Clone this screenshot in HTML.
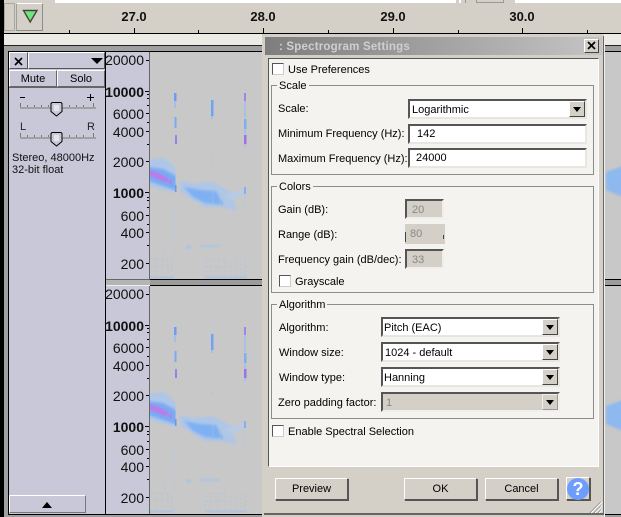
<!DOCTYPE html>
<html><head><meta charset="utf-8">
<style>
html,body{margin:0;padding:0}
body{width:621px;height:517px;overflow:hidden;position:relative;background:#a0a0a0;font-family:"Liberation Sans",sans-serif;font-size:11px;color:#000}
div,span,svg{position:absolute;box-sizing:border-box}
.t{white-space:nowrap;line-height:14px;height:14px}
.ax{font-size:14px;color:#111;white-space:nowrap;line-height:14px;text-align:right;width:40px;left:104px}
.rl{font-size:13px;font-weight:bold;color:#111;white-space:nowrap;line-height:14px;width:50px;text-align:center;top:10px}
.in{background:#fff;border:2px solid;border-color:#555 #e8e6e0 #e8e6e0 #555;height:20px;line-height:17px;padding-left:7px;white-space:nowrap}
.c{line-height:19px}
.dis{background:#d4d0c8;color:#888;border-color:#555 #f0efea #f0efea #555;line-height:19px}
.btn{background:#d4d0c8;border:1px solid;border-color:#fff #555 #555 #fff;box-shadow:1px 1px 0 #555;text-align:center;line-height:21px}
.arr{background:#d4d0c8;border:1px solid;border-color:#fff #444 #444 #fff;width:16px;height:16px;top:0;right:0}
.arr:after{content:"";position:absolute;left:3px;top:5px;border:4px solid transparent;border-top:5px solid #000;border-bottom:0}
.cb{width:12px;height:12px;background:#fff;border:1px solid;border-color:#555 #ccc #ccc #555}
.gb{border:1px solid #8c8c88;left:271px;width:323px}
.lg{background:#f4f3ef;padding:0 2px;left:5px;top:-6px;line-height:13px;height:13px;white-space:nowrap;font-size:11px}
</style></head><body>

<!-- top chrome -->
<div style="left:0;top:0;width:4px;height:517px;background:#000"></div>
<div style="left:4px;top:0;width:617px;height:34px;background:#d4d0c8"></div>
<div style="left:55px;top:0;width:566px;height:3px;background:#fff"></div>
<div style="left:456px;top:0;width:59px;height:3px;background:#d4d0c8"></div>
<div style="left:459px;top:0;width:2px;height:3px;background:#fff"></div>
<div style="left:465px;top:0;width:1px;height:3px;background:#999"></div>
<div style="left:476px;top:0;width:28px;height:3px;border-bottom:1px solid #999;border-left:1px solid #999;border-right:1px solid #999"></div>
<div style="left:4px;top:3px;width:11px;height:28px;border:1px solid #a8a8a0"></div>
<div style="left:16px;top:3px;width:27px;height:28px;border:1px solid #8c8c88;border-top-color:#fff;border-left-color:#a0a09a"></div>
<svg style="left:22px;top:9px" width="17" height="15"><path d="M1.500 1.500H15L8.200 13Z" fill="#6ee67a" stroke="#444" stroke-width="1.400"/></svg>
<div class="rl" style="left:109px">27.0</div>
<div class="rl" style="left:238px">28.0</div>
<div class="rl" style="left:368px">29.0</div>
<div class="rl" style="left:497px">30.0</div>
<div style="left:69px;top:30px;width:1px;height:3px;background:#000"></div>
<div style="left:134px;top:28px;width:1px;height:5px;background:#000"></div>
<div style="left:198px;top:30px;width:1px;height:3px;background:#000"></div>
<div style="left:263px;top:28px;width:1px;height:5px;background:#000"></div>
<div style="left:328px;top:30px;width:1px;height:3px;background:#000"></div>
<div style="left:393px;top:28px;width:1px;height:5px;background:#000"></div>
<div style="left:458px;top:30px;width:1px;height:3px;background:#000"></div>
<div style="left:522px;top:28px;width:1px;height:5px;background:#000"></div>
<div style="left:587px;top:30px;width:1px;height:3px;background:#000"></div>
<div style="left:4px;top:33px;width:617px;height:1px;background:#000"></div>
<div style="left:4px;top:34px;width:617px;height:12px;background:#ecebe6"></div>
<div style="left:4px;top:45px;width:617px;height:1px;background:#222"></div>
<div style="left:4px;top:46px;width:617px;height:471px;background:#a0a0a0"></div>

<!-- track panel -->
<div style="left:8px;top:51px;width:613px;height:464px;background:#000"></div>
<div style="left:9px;top:52px;width:96px;height:462px;background:#c8c8d8"></div>
<div style="left:9px;top:52px;width:19px;height:17px;background:#c8c8d8;border:1px solid;border-color:#fff #555 #555 #fff"></div>
<svg style="left:14px;top:57px" width="10" height="10"><path d="M1 1L8 8M8 1L1 8" stroke="#000" stroke-width="1.600"/></svg>
<div style="left:28px;top:52px;width:77px;height:17px;background:#c8c8d8;border:1px solid;border-color:#fff #555 #555 #fff"></div>
<div style="left:91px;top:58px;border:6px solid transparent;border-top:6px solid #000;border-bottom:0"></div>
<div style="left:9px;top:70px;width:48px;height:17px;background:#c8c8d8;border:1px solid;border-color:#fff #666 #666 #fff;text-align:center;line-height:16px">Mute</div>
<div style="left:57px;top:70px;width:48px;height:17px;background:#c8c8d8;border:1px solid;border-color:#fff #666 #666 #fff;text-align:center;line-height:16px">Solo</div>
<div style="left:9px;top:87px;width:96px;height:1px;background:#666"></div>

<svg style="left:15px;top:92px" width="85" height="60">
<g fill="#000"><rect x="5" y="5" width="5" height="1"/><rect x="72" y="5" width="7" height="1"/><rect x="75" y="2" width="1" height="7"/></g>
<g>
<rect x="5" y="15" width="76" height="2" fill="#a0a0a0"/>
<path d="M5.500 11v4M12.500 13v2M19.500 13v2M26.500 13v2M33.500 13v2M54.500 13v2M61.500 13v2M68.500 13v2M78.500 11v4" stroke="#777" fill="none"/>
<path d="M37 10.500h9l1 1v8l-5.500 4.500l-5.500-4.500v-8z" fill="#c8c8d8" stroke="#000" stroke-width="1"/>
<path d="M39 14h5M39 16h5M39 18h5" stroke="#fff"/>
</g>
<g transform="translate(0,30)">
<rect x="5" y="15" width="76" height="2" fill="#a0a0a0"/>
<path d="M5.500 11v4M12.500 13v2M19.500 13v2M26.500 13v2M33.500 13v2M54.500 13v2M61.500 13v2M68.500 13v2M78.500 11v4" stroke="#777" fill="none"/>
<path d="M37 10.500h9l1 1v8l-5.500 4.500l-5.500-4.500v-8z" fill="#c8c8d8" stroke="#000" stroke-width="1"/>
<path d="M39 14h5M39 16h5M39 18h5" stroke="#fff"/>
</g>
</svg>
<div class="t" style="left:20px;top:120px;color:#222">L</div>
<div class="t" style="left:87px;top:120px;color:#222">R</div>
<div class="t" style="left:12px;top:151px;color:#111">Stereo, 48000Hz</div>
<div class="t" style="left:12px;top:163px;color:#111">32-bit float</div>
<div style="left:9px;top:495px;width:77px;height:18px;background:#c8c8d8;border:1px solid;border-color:#fff #777 #777 #fff"></div>
<div style="left:42px;top:502px;border:5.500px solid transparent;border-bottom:6px solid #000;border-top:0"></div>

<!-- axes -->
<div style="left:106px;top:52px;width:44px;height:227px;background:#c8c8d8"></div>
<div style="left:106px;top:286px;width:44px;height:228px;background:#c8c8d8"></div>
<div style="left:106px;top:279px;width:44px;height:7px;background:#b4b4b4;border-top:1px solid #666;border-bottom:1px solid #eee"></div>
<div style="left:105px;top:52px;width:1px;height:462px;background:#000"></div>
<div style="left:149px;top:52px;width:1px;height:227px;background:#666"></div>
<div style="left:149px;top:286px;width:1px;height:228px;background:#666"></div>

<div class="ax" style="top:53px">20000</div>
<div class="ax" style="top:85px;font-weight:bold">10000</div>
<div class="ax" style="top:107px">6000</div>
<div class="ax" style="top:125px">4000</div>
<div class="ax" style="top:155px">2000</div>
<div class="ax" style="top:186px;font-weight:bold">1000</div>
<div class="ax" style="top:209px">600</div>
<div class="ax" style="top:226px">400</div>
<div class="ax" style="top:257px">200</div>

<div class="ax" style="top:287px">20000</div>
<div class="ax" style="top:319px;font-weight:bold">10000</div>
<div class="ax" style="top:341px">6000</div>
<div class="ax" style="top:359px">4000</div>
<div class="ax" style="top:389px">2000</div>
<div class="ax" style="top:420px;font-weight:bold">1000</div>
<div class="ax" style="top:443px">600</div>
<div class="ax" style="top:460px">400</div>
<div class="ax" style="top:491px">200</div>

<svg style="left:144px;top:52px" width="6" height="462">
<g fill="#000">
<rect x="2" y="8" width="3" height="1"/><rect x="1" y="39" width="4" height="1"/><rect x="3" y="42" width="2" height="1"/><rect x="3" y="46" width="2" height="1"/><rect x="3" y="53" width="2" height="1"/><rect x="2" y="61" width="3" height="1"/><rect x="3" y="70" width="2" height="1"/><rect x="2" y="79" width="3" height="1"/><rect x="3" y="92" width="2" height="1"/><rect x="2" y="109" width="3" height="1"/><rect x="1" y="140" width="4" height="1"/><rect x="3" y="145" width="2" height="1"/><rect x="3" y="148" width="2" height="1"/><rect x="3" y="155" width="2" height="1"/><rect x="2" y="163" width="3" height="1"/><rect x="3" y="172" width="2" height="1"/><rect x="2" y="180" width="3" height="1"/><rect x="3" y="193" width="2" height="1"/><rect x="2" y="211" width="3" height="1"/>
</g>
<g transform="translate(0,234)" fill="#000">
<rect x="2" y="8" width="3" height="1"/><rect x="1" y="39" width="4" height="1"/><rect x="3" y="42" width="2" height="1"/><rect x="3" y="46" width="2" height="1"/><rect x="3" y="53" width="2" height="1"/><rect x="2" y="61" width="3" height="1"/><rect x="3" y="70" width="2" height="1"/><rect x="2" y="79" width="3" height="1"/><rect x="3" y="92" width="2" height="1"/><rect x="2" y="109" width="3" height="1"/><rect x="1" y="140" width="4" height="1"/><rect x="3" y="145" width="2" height="1"/><rect x="3" y="148" width="2" height="1"/><rect x="3" y="155" width="2" height="1"/><rect x="2" y="163" width="3" height="1"/><rect x="3" y="172" width="2" height="1"/><rect x="2" y="180" width="3" height="1"/><rect x="3" y="193" width="2" height="1"/><rect x="2" y="211" width="3" height="1"/>
</g>
</svg>

<!-- spectrograms -->
<svg style="left:0;top:0" width="621" height="517">
<defs>
<filter id="b2" x="-30%" y="-30%" width="160%" height="160%"><feGaussianBlur stdDeviation="1.300"/></filter>
<filter id="b1" x="-30%" y="-30%" width="160%" height="160%"><feGaussianBlur stdDeviation="0.800"/></filter>
<clipPath id="cb1"><rect x="150" y="150" width="25.500" height="50"/></clipPath>
<g id="sp">
<g clip-path="url(#cb1)">
<g filter="url(#b2)" fill="#aec6e8"><path d="M146 160L164 158L178 170L178 193L160 189L146 184Z"/></g>
<g filter="url(#b2)" fill="#78aaf4"><path d="M146 167L163 169L178 177L178 191L160 185L146 180Z"/></g>
<g filter="url(#b1)" fill="#b87ee8"><path d="M150 170L159 173L168 178L168 182L162 181L150 176Z"/><rect x="169" y="180" width="3" height="4"/></g>
</g>
<g filter="url(#b2)" fill="#aec6e8">
<path d="M180 181L194 184L212 182L232 192L237 211L222 207L205 207L190 198L180 191Z"/>
</g>
<g filter="url(#b2)" fill="#7eb0f4">
<path d="M184 187L200 190L216 191L224 205L205 203L193 197Z"/>
</g>
<g filter="url(#b1)" fill="#b4cbea"><path d="M225 195L238 192L245 189L245 193L232 200Z"/></g>
<path d="M220 190v18M224 190v18M228 193v15M232 194v15M236 195v13M213 188v15" stroke="#c8c8c8" stroke-width="1" opacity=".4"/>
<g shape-rendering="crispEdges">
<rect x="174" y="93" width="2.500" height="8" fill="#6e9cf0"/><rect x="174" y="101" width="2" height="7" fill="#a4bee6"/><rect x="174.500" y="117" width="2" height="11" fill="#7aaaf0"/><rect x="175" y="135" width="2" height="3" fill="#8a90ea"/><rect x="175" y="138" width="2" height="6" fill="#a478e8"/>
<rect x="211" y="100" width="2.500" height="16" fill="#6ea4f2"/><rect x="211" y="116" width="2" height="3" fill="#a4bee6"/><rect x="212" y="92" width="1" height="8" fill="#bccce0"/><rect x="212" y="158" width="1" height="4" fill="#b4c4dc"/>
<rect x="244" y="93" width="2" height="8" fill="#a880ea"/><rect x="244" y="101" width="2" height="17" fill="#a8c0e4"/><rect x="244" y="119" width="2.500" height="10" fill="#80aef0"/><rect x="244" y="129" width="2" height="6" fill="#a8c0e4"/><rect x="244" y="135" width="2.500" height="9" fill="#a070e8"/><rect x="244" y="144" width="2" height="3" fill="#a8c0e4"/>
<rect x="175" y="185" width="1.500" height="7" fill="#6a98e8"/><rect x="244" y="187" width="2" height="7" fill="#88aef0"/><rect x="244" y="194" width="1" height="16" fill="#b4c8e0"/>
<rect x="175" y="210" width="1" height="30" fill="#bccade"/>
</g>
<g filter="url(#b1)">
<ellipse cx="189" cy="247" rx="2.500" ry="2" fill="#a8c4ea"/><rect x="201" y="245" width="18" height="2" fill="#a8c4e8"/>
</g>
<g fill="none" stroke="#a8c0e4" stroke-width="1" opacity=".45">
<path d="M165 246v12M174 246v12M156 258v20M162 260v18M168 260v18M172 258v20M205 258v20M210 262v16M218 262v16M225 258v20M231 262v16M236 262v16M241 260v18M245 258v20" stroke-dasharray="2 2"/>
<path d="M151 259h20M151 266h22M207 260h20M205 267h20" stroke-dasharray="3 2"/>
</g>
<path d="M150 277.500h24M205 277.500h42" stroke="#a4c0e8" stroke-width="2.500" opacity=".55"/>
<g filter="url(#b2)" fill="#8db8f0"><path d="M606 172L623 166L623 197L606 190Z"/></g>
</g>
</defs>
<rect x="150" y="52" width="471" height="227" fill="#c8c8c8"/>
<rect x="150" y="286" width="471" height="228" fill="#c8c8c8"/>
<use href="#sp"/>
<use href="#sp" y="234"/>
</svg>
<div style="left:150px;top:279px;width:471px;height:1px;background:#000"></div>
<div style="left:150px;top:280px;width:471px;height:5px;background:#9c9c9c"></div>
<div style="left:150px;top:285px;width:471px;height:1px;background:#000"></div>
<div style="left:9px;top:514px;width:612px;height:1px;background:#000"></div>
<div style="left:150px;top:515px;width:471px;height:2px;background:#a0a0a0"></div>

<!-- dialog -->
<div style="left:262px;top:34px;width:343px;height:483px;background:#d4d0c8;border-right:1px solid #f0efea"></div>
<div style="left:264px;top:36px;width:340px;height:479px;background:#d4d0c8;border-right:1px solid #666;border-bottom:2px solid #666"></div>
<div style="left:265px;top:37px;width:337px;height:18px;background:linear-gradient(90deg,#7e7e7e,#c4c4c4)"></div>
<div class="t" style="left:279px;top:40px;font-weight:bold;font-size:11.5px;color:#cfcfcf;line-height:15px;letter-spacing:.2px">: Spectrogram Settings</div>
<div style="left:584px;top:39px;width:15px;height:14px;background:#d4d0c8;border:1px solid;border-color:#fff #444 #444 #fff"></div>
<svg style="left:587px;top:41px" width="10" height="10"><path d="M1 1L8 8M8 1L1 8" stroke="#000" stroke-width="1.700"/></svg>

<div style="left:268px;top:58px;width:331px;height:409px;background:#f4f3ef;border:1px solid;border-color:#555 #fff #fff #555"></div>

<div class="cb" style="left:272px;top:63px"></div>
<div class="t" style="left:288px;top:63px">Use Preferences</div>

<div class="gb" style="top:85px;height:90px"><div class="lg">Scale</div></div>
<div class="t" style="left:278px;top:102px">Scale:</div>
<div class="in c" style="left:408px;top:99px;width:179px;padding-left:2px;">Logarithmic<div class="arr"></div></div>
<div class="t" style="left:278px;top:127px">Minimum Frequency (Hz):</div>
<div class="in" style="left:408px;top:124px;width:179px">142</div>
<div class="t" style="left:278px;top:152px">Maximum Frequency (Hz):</div>
<div class="in" style="left:408px;top:148px;width:179px;padding-left:6px">24000</div>

<div class="gb" style="top:186px;height:107px"><div class="lg">Colors</div></div>
<div class="t" style="left:278px;top:203px">Gain (dB):</div>
<div class="in dis" style="left:405px;top:199px;width:39px;padding-left:5px">20</div>
<div class="t" style="left:278px;top:228px">Range (dB):</div>
<div class="in dis" style="left:405px;top:224px;width:40px;border:0;line-height:21px;padding-left:5px">80</div>
<div style="left:405px;top:232px;width:1px;height:10px;background:#444"></div>
<div style="left:443px;top:235px;width:1px;height:4px;background:#444"></div>
<div class="t" style="left:278px;top:253px">Frequency gain (dB/dec):</div>
<div class="in dis" style="left:405px;top:249px;width:39px;padding-left:5px">33</div>
<div class="cb" style="left:279px;top:275px"></div>
<div class="t" style="left:295px;top:275px">Grayscale</div>

<div class="gb" style="top:304px;height:115px"><div class="lg">Algorithm</div></div>
<div class="t" style="left:279px;top:321px">Algorithm:</div>
<div class="in c" style="left:381px;top:317px;width:179px;padding-left:1px">Pitch (EAC)<div class="arr"></div></div>
<div class="t" style="left:279px;top:346px">Window size:</div>
<div class="in c" style="left:381px;top:342px;width:179px;padding-left:2px">1024 - default<div class="arr"></div></div>
<div class="t" style="left:279px;top:371px">Window type:</div>
<div class="in c" style="left:381px;top:367px;width:179px;padding-left:1px">Hanning<div class="arr"></div></div>
<div class="t" style="left:278px;top:396px">Zero padding factor:</div>
<div class="in dis" style="left:381px;top:392px;width:179px;padding-left:3px">1<div class="arr" style="border-color:#eee #999 #999 #eee"></div></div>

<div class="cb" style="left:272px;top:425px"></div>
<div class="t" style="left:288px;top:425px">Enable Spectral Selection</div>

<div class="btn" style="left:275px;top:478px;width:73px;height:22px">Preview</div>
<div class="btn" style="left:404px;top:478px;width:73px;height:22px">OK</div>
<div class="btn" style="left:485px;top:478px;width:73px;height:22px">Cancel</div>
<div class="btn" style="left:566px;top:477px;width:24px;height:23px"></div>
<div style="left:567px;top:478px;width:22px;height:22px;border-radius:50%;background:#6e9cff;color:#fff;font-weight:bold;font-size:18px;line-height:22px;text-align:center">?</div>
<svg style="left:589px;top:501px" width="14" height="13"><path d="M1 12L12 1M5 12L12 5M9 12L12 9" stroke="#888" stroke-width="1.200"/><path d="M2 12L13 1M6 12L13 5M10 12L13 9" stroke="#fff" stroke-width="1"/></svg>
</body></html>
